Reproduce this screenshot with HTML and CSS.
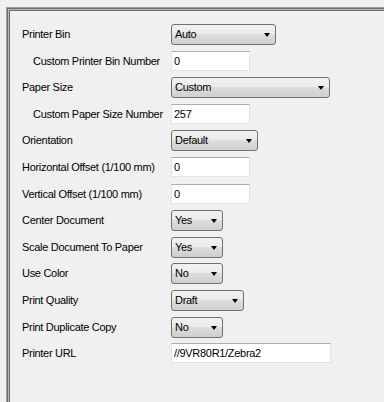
FILE: index.html
```html
<!DOCTYPE html>
<html>
<head>
<meta charset="utf-8">
<link rel="stylesheet" href="styles.css">
</head>
<body>
<div class="frame">
  <div class="form">
    <div class="label">Printer Bin</div>
    <div class="combo w105"><span>Auto</span><i class="arrow"></i></div>

    <div class="label sub">Custom Printer Bin Number</div>
    <div class="text w79">0</div>

    <div class="label">Paper Size</div>
    <div class="combo w159"><span>Custom</span><i class="arrow"></i></div>

    <div class="label sub">Custom Paper Size Number</div>
    <div class="text w79">257</div>

    <div class="label">Orientation</div>
    <div class="combo w87"><span>Default</span><i class="arrow"></i></div>

    <div class="label">Horizontal Offset (1/100 mm)</div>
    <div class="text w79">0</div>

    <div class="label">Vertical Offset (1/100 mm)</div>
    <div class="text w79">0</div>

    <div class="label">Center Document</div>
    <div class="combo w52"><span>Yes</span><i class="arrow"></i></div>

    <div class="label">Scale Document To Paper</div>
    <div class="combo w52"><span>Yes</span><i class="arrow"></i></div>

    <div class="label">Use Color</div>
    <div class="combo w52"><span>No</span><i class="arrow"></i></div>

    <div class="label">Print Quality</div>
    <div class="combo w73"><span>Draft</span><i class="arrow"></i></div>

    <div class="label">Print Duplicate Copy</div>
    <div class="combo w52"><span>No</span><i class="arrow"></i></div>

    <div class="label">Printer URL</div>
    <div class="text w160">//9VR80R1/Zebra2</div>
  </div>
</div>
</body>
</html>
```
FILE: styles.css
```css
html, body {
  margin: 0;
  padding: 0;
  background: #f0f0f0;
  width: 384px;
  height: 402px;
  overflow: hidden;
  font-family: "Liberation Sans", Arial, sans-serif;
  font-size: 11px;
  letter-spacing: -0.3px;
  color: #000;
}

.frame {
  margin: 7px 0 0 6px;
  height: 395px;
  border-top: 1px solid #a0a0a0;
  border-left: 1px solid #a0a0a0;
  box-shadow: inset 1px 1px 0 #6d6d6d, inset 2px 2px 0 #b9b9b9, inset 3px 3px 0 #6d6d6d;
  box-sizing: border-box;
  padding: 16px 0 0 15px;
}

.form {
  display: grid;
  grid-template-columns: 149px auto;
  grid-auto-rows: 26.6px;
  align-items: start;
}

.label {
  line-height: 20px;
  white-space: nowrap;
}

.label.sub {
  padding-left: 11px;
}

.combo {
  position: relative;
  height: 21px;
  box-sizing: border-box;
  border: 1px solid #707070;
  border-radius: 3px;
  background: linear-gradient(#f2f2f2 0%, #ebebeb 45%, #dddddd 50%, #cfcfcf 100%);
  line-height: 19px;
  padding-left: 3px;
  justify-self: start;
}

.arrow {
  position: absolute;
  right: 5px;
  top: 8px;
  width: 0;
  height: 0;
  border-left: 3.5px solid transparent;
  border-right: 3.5px solid transparent;
  border-top: 4px solid #000;
}

.text {
  height: 20px;
  box-sizing: border-box;
  background: #fff;
  border: 1px solid #e2e3ea;
  border-top-color: #abadb3;
  line-height: 18px;
  padding-left: 2px;
  justify-self: start;
  white-space: nowrap;
}

.w105 { width: 105px; }
.w159 { width: 159px; }
.w87 { width: 87px; }
.w52 { width: 52px; }
.w73 { width: 73px; }
.w79 { width: 79px; }
.w160 { width: 160px; }
```
